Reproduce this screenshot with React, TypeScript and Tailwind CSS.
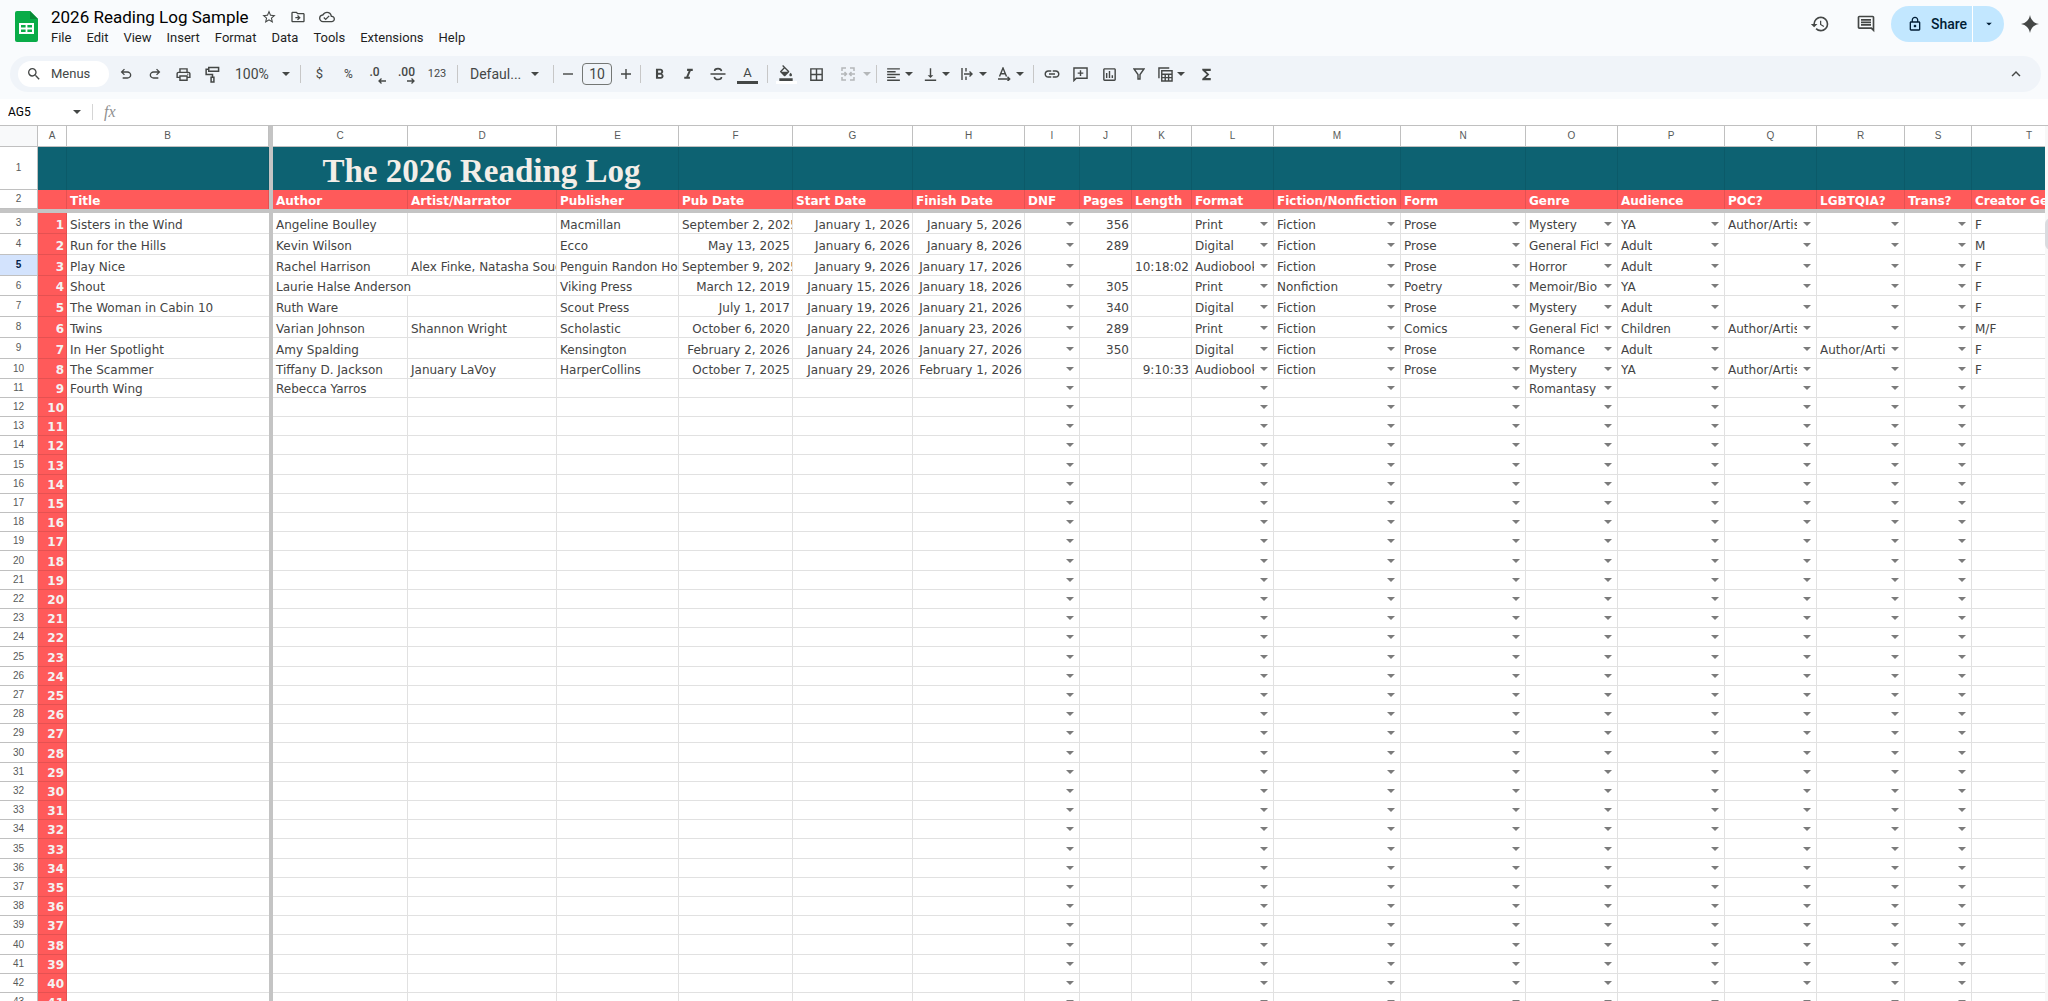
import React from 'react';
import {
  MdStarBorder,
  MdOutlineDriveFileMove,
  MdOutlineCloudDone,
  MdSearch,
  MdOutlinePrint,
  MdFormatBold,
  MdFormatItalic,
  MdFormatColorFill,
  MdBorderAll,
  MdFormatAlignLeft,
  MdVerticalAlignBottom,
  MdInsertLink,
  MdOutlineAddComment,
  MdOutlineInsertChart,
  MdOutlineFilterAlt,
  MdFunctions,
  MdHistory,
  MdOutlineComment,
  MdLockOutline,
  MdKeyboardArrowUp,
} from 'react-icons/md';

type ColumnKind = 'text' | 'right' | 'select';

interface Column {
  letter: string;
  label: string;
  width: string;
  kind: ColumnKind;
}

const columns: Column[] = [
  { letter: 'C', label: 'Author', width: 'w-[135px]', kind: 'text' },
  { letter: 'D', label: 'Artist/Narrator', width: 'w-[149px]', kind: 'text' },
  { letter: 'E', label: 'Publisher', width: 'w-[122px]', kind: 'text' },
  { letter: 'F', label: 'Pub Date', width: 'w-[114px]', kind: 'right' },
  { letter: 'G', label: 'Start Date', width: 'w-[120px]', kind: 'right' },
  { letter: 'H', label: 'Finish Date', width: 'w-[112px]', kind: 'right' },
  { letter: 'I', label: 'DNF', width: 'w-[55px]', kind: 'select' },
  { letter: 'J', label: 'Pages', width: 'w-[52px]', kind: 'right' },
  { letter: 'K', label: 'Length', width: 'w-[60px]', kind: 'right' },
  { letter: 'L', label: 'Format', width: 'w-[82px]', kind: 'select' },
  { letter: 'M', label: 'Fiction/Nonfiction', width: 'w-[127px]', kind: 'select' },
  { letter: 'N', label: 'Form', width: 'w-[125px]', kind: 'select' },
  { letter: 'O', label: 'Genre', width: 'w-[92px]', kind: 'select' },
  { letter: 'P', label: 'Audience', width: 'w-[107px]', kind: 'select' },
  { letter: 'Q', label: 'POC?', width: 'w-[92px]', kind: 'select' },
  { letter: 'R', label: 'LGBTQIA?', width: 'w-[88px]', kind: 'select' },
  { letter: 'S', label: 'Trans?', width: 'w-[67px]', kind: 'select' },
  { letter: 'T', label: 'Creator Gender', width: 'w-[115px]', kind: 'text' },
];

// Title, then one value for each of the columns C to T
const books: string[][] = [
  ['Sisters in the Wind', 'Angeline Boulley', '', 'Macmillan', 'September 2, 2025', 'January 1, 2026', 'January 5, 2026', '', '356', '', 'Print', 'Fiction', 'Prose', 'Mystery', 'YA', 'Author/Artist', '', '', 'F'],
  ['Run for the Hills', 'Kevin Wilson', '', 'Ecco', 'May 13, 2025', 'January 6, 2026', 'January 8, 2026', '', '289', '', 'Digital', 'Fiction', 'Prose', 'General Fiction', 'Adult', '', '', '', 'M'],
  ['Play Nice', 'Rachel Harrison', 'Alex Finke, Natasha Soudek', 'Penguin Randon House', 'September 9, 2025', 'January 9, 2026', 'January 17, 2026', '', '', '10:18:02', 'Audiobook', 'Fiction', 'Prose', 'Horror', 'Adult', '', '', '', 'F'],
  ['Shout', 'Laurie Halse Anderson', '', 'Viking Press', 'March 12, 2019', 'January 15, 2026', 'January 18, 2026', '', '305', '', 'Print', 'Nonfiction', 'Poetry', 'Memoir/Bio', 'YA', '', '', '', 'F'],
  ['The Woman in Cabin 10', 'Ruth Ware', '', 'Scout Press', 'July 1, 2017', 'January 19, 2026', 'January 21, 2026', '', '340', '', 'Digital', 'Fiction', 'Prose', 'Mystery', 'Adult', '', '', '', 'F'],
  ['Twins', 'Varian Johnson', 'Shannon Wright', 'Scholastic', 'October 6, 2020', 'January 22, 2026', 'January 23, 2026', '', '289', '', 'Print', 'Fiction', 'Comics', 'General Fiction', 'Children', 'Author/Artist', '', '', 'M/F'],
  ['In Her Spotlight', 'Amy Spalding', '', 'Kensington', 'February 2, 2026', 'January 24, 2026', 'January 27, 2026', '', '350', '', 'Digital', 'Fiction', 'Prose', 'Romance', 'Adult', '', 'Author/Artist', '', 'F'],
  ['The Scammer', 'Tiffany D. Jackson', 'January LaVoy', 'HarperCollins', 'October 7, 2025', 'January 29, 2026', 'February 1, 2026', '', '', '9:10:33', 'Audiobook', 'Fiction', 'Prose', 'Mystery', 'YA', 'Author/Artist', '', '', 'F'],
  ['Fourth Wing', 'Rebecca Yarros', '', '', '', '', '', '', '', '', '', '', '', 'Romantasy', '', '', '', '', ''],
];

const ROW_COUNT = 41;
const ACTIVE_ROW = 5;
const menus = ['File', 'Edit', 'View', 'Insert', 'Format', 'Data', 'Tools', 'Extensions', 'Help'];

const rowHeight = (index: number) => {
  if (index < 8) return index % 4 === 3 ? 'h-[20px]' : 'h-[21px]';
  return (index - 8) % 5 === 4 ? 'h-[20px]' : 'h-[19px]';
};

const Caret = ({ className = '' }: { className?: string }) => (
  <svg viewBox="0 0 8 4" className={`h-1 w-2 shrink-0 fill-current ${className}`} aria-hidden="true">
    <path d="M0 0h8L4 4z" />
  </svg>
);

const Divider = () => <span className="mx-1 h-[18px] w-px shrink-0 bg-[#c7c7c7]" />;

interface ToolButtonProps {
  label: string;
  width?: string;
  children: React.ReactNode;
}

const ToolButton = ({ label, width = 'w-[29px]', children }: ToolButtonProps) => (
  <button type="button" aria-label={label} className={`flex h-7 shrink-0 items-center justify-center ${width}`}>
    {children}
  </button>
);

const DropdownButton = ({ label, children }: ToolButtonProps) => (
  <button type="button" aria-label={label} className="flex h-7 w-[37px] shrink-0 items-center">
    <span className="flex w-6 justify-center">{children}</span>
    <Caret />
  </button>
);

const SheetsLogo = () => (
  <svg viewBox="0 0 23 31" className="h-[31px] w-[23px] shrink-0" aria-hidden="true">
    <path d="M2 0h13l8 8v21a2 2 0 0 1-2 2H2a2 2 0 0 1-2-2V2a2 2 0 0 1 2-2z" fill="#0aac48" />
    <path d="M15 0l8 8h-8z" fill="#078a35" />
    <path d="M4 12h15v11H4zM6 14v2.600h4.600V14zM12.400 14v2.600H17V14zM6 18.400V21h4.600v-2.600zM12.400 18.400V21H17v-2.600z" fill="#fff" fillRule="evenodd" />
  </svg>
);

const TopBar = () => (
  <header className="flex items-start pl-[15px] pr-2">
    <div className="pt-[11px]">
      <SheetsLogo />
    </div>
    <div className="ml-[9px] pt-1">
      <div className="flex h-[26px] items-center pl-1">
        <h1 className="text-[17px] leading-6 text-black">2026 Reading Log Sample</h1>
        <div className="ml-3 flex items-center gap-[13px] text-[16px] text-[#444746]">
          <button type="button" aria-label="Star"><MdStarBorder /></button>
          <button type="button" aria-label="Move"><MdOutlineDriveFileMove /></button>
          <button type="button" aria-label="See document status"><MdOutlineCloudDone /></button>
        </div>
      </div>
      <nav className="flex gap-[15px] pl-1 text-[13px] leading-4 text-[#1f1f1f]">
        {menus.map((menu) => (
          <button key={menu} type="button">{menu}</button>
        ))}
      </nav>
    </div>
    <div className="ml-auto flex items-center pt-1.5 text-[#444746]">
      <button type="button" aria-label="Version history" className="mr-[26px]"><MdHistory className="size-5" /></button>
      <button type="button" aria-label="Comments" className="mr-[15px]"><MdOutlineComment className="size-5" /></button>
      <div className="mr-4 flex h-9 overflow-hidden rounded-full bg-[#c2e7ff] text-[#001d35]">
        <button type="button" className="flex w-[82px] items-center gap-2 border-r border-white pl-4 text-[14px] font-medium">
          <MdLockOutline className="size-4" />
          Share
        </button>
        <button type="button" aria-label="Share options" className="flex w-[31px] items-center justify-center">
          <Caret className="scale-75" />
        </button>
      </div>
      <button type="button" aria-label="Ask Gemini">
        <svg viewBox="0 0 20 20" className="size-5 fill-[#444746]" aria-hidden="true">
          <path d="M10 1c.9 5 4 8.100 9 9-5 .9-8.100 4-9 9-.9-5-4-8.100-9-9 5-.9 8.100-4 9-9z" />
        </svg>
      </button>
    </div>
  </header>
);

const Toolbar = () => (
  <div className="ml-2.5 mr-[7px] mt-2.5 flex h-9 items-center rounded-full bg-[#f0f4f9] pl-2 pr-4 text-[14px] text-[#444746]">
    <button type="button" className="mr-0.5 flex h-[26px] w-[91px] shrink-0 items-center gap-[9px] rounded-full bg-white pl-2 text-[13px]">
      <MdSearch className="size-4" />
      Menus
    </button>
    <ToolButton label="Undo">
      <svg viewBox="0 -960 960 960" className="size-4 fill-current"><path d="M280-200v-80h284q63 0 109.500-40T720-420q0-60-46.500-100T564-560H312l104 104-56 56-200-200 200-200 56 56-104 104h252q97 0 166.500 63T800-420q0 94-69.500 157T564-200H280Z" /></svg>
    </ToolButton>
    <ToolButton label="Redo">
      <svg viewBox="0 -960 960 960" className="size-4 fill-current"><path d="M396-200q-97 0-166.500-63T160-420q0-94 69.500-157T396-640h252L544-744l56-56 200 200-200 200-56-56 104-104H396q-63 0-109.500 40T240-420q0 60 46.500 100T396-280h284v80H396Z" /></svg>
    </ToolButton>
    <ToolButton label="Print"><MdOutlinePrint className="size-[17px]" /></ToolButton>
    <ToolButton label="Paint format">
      <svg viewBox="0 0 16 18" className="h-[17px] w-[15px] fill-none stroke-current stroke-[1.6]"><path d="M4 1.500h10.500v4H4zM4 3.500H1.200V9H8v3M6.500 12h3v5h-3z" /></svg>
    </ToolButton>
    <div className="relative flex w-[69px] shrink-0 items-center">
      <select aria-label="Zoom" className="w-full appearance-none pl-2" defaultValue="100%">
        <option>100%</option>
      </select>
      <Caret className="pointer-events-none absolute right-1.5" />
    </div>
    <Divider />
    <ToolButton label="Format as currency"><span className="text-[13px]">$</span></ToolButton>
    <ToolButton label="Format as percent"><span className="text-[12px]">%</span></ToolButton>
    <ToolButton label="Decrease decimal places">
      <span className="relative pb-1 pr-1.5 text-[12px] font-medium leading-4">
        .0
        <svg viewBox="0 0 8 6" className="absolute bottom-0 right-0 h-1.5 w-2 fill-none stroke-current stroke-[1.3]"><path d="M8 3H1M3.500.5L1 3l2.500 2.500" /></svg>
      </span>
    </ToolButton>
    <ToolButton label="Increase decimal places">
      <span className="relative pb-1 text-[12px] font-medium leading-4">
        .00
        <svg viewBox="0 0 8 6" className="absolute bottom-0 right-0 h-1.5 w-2 fill-none stroke-current stroke-[1.3]"><path d="M0 3h7M4.500.5L7 3 4.500 5.500" /></svg>
      </span>
    </ToolButton>
    <ToolButton label="More formats" width="w-8"><span className="text-[11px]">123</span></ToolButton>
    <Divider />
    <div className="relative flex w-[87px] shrink-0 items-center">
      <select aria-label="Font" className="w-full appearance-none pl-2" defaultValue="Defaul...">
        <option>Defaul...</option>
      </select>
      <Caret className="pointer-events-none absolute right-2.5" />
    </div>
    <Divider />
    <ToolButton label="Decrease font size" width="w-5">
      <svg viewBox="0 0 10 10" className="size-2.5 fill-none stroke-current stroke-[1.4]"><path d="M0 5h10" /></svg>
    </ToolButton>
    <input aria-label="Font size" defaultValue="10" className="mx-1 h-[22px] w-[30px] rounded border border-[#747775] text-center" />
    <ToolButton label="Increase font size" width="w-5">
      <svg viewBox="0 0 10 10" className="size-2.5 fill-none stroke-current stroke-[1.4]"><path d="M0 5h10M5 0v10" /></svg>
    </ToolButton>
    <Divider />
    <ToolButton label="Bold"><MdFormatBold className="size-[17px]" /></ToolButton>
    <ToolButton label="Italic"><MdFormatItalic className="size-[17px]" /></ToolButton>
    <ToolButton label="Strikethrough">
      <svg viewBox="0 0 16 16" className="size-4 fill-none stroke-current stroke-[1.6]"><path d="M.5 8h15M11.500 5.200C11.200 3.500 9.800 2.600 8 2.600S4.600 3.600 4.600 5M4.300 10.800c.3 1.800 1.900 2.700 3.700 2.700s3.500-.9 3.500-2.500" /></svg>
    </ToolButton>
    <ToolButton label="Text color" width="w-[31px]">
      <span className="w-[21px] border-b-[3px] border-current text-[13px] leading-4">A</span>
    </ToolButton>
    <Divider />
    <ToolButton label="Fill color" width="w-7">
      <span className="flex w-[21px] justify-center border-b-[3px] border-white"><MdFormatColorFill className="size-4" /></span>
    </ToolButton>
    <ToolButton label="Borders" width="w-8"><MdBorderAll className="size-[17px]" /></ToolButton>
    <button type="button" aria-label="Merge cells" className="flex h-7 w-10 shrink-0 items-center text-[#b4b7b9]">
      <span className="flex w-[31px] justify-center">
        <svg viewBox="0 0 14 14" className="size-3.5 fill-none stroke-current stroke-[1.5]"><path d="M5 1H1v3M9 1h4v3M5 13H1v-3M9 13h4v-3M0 7h5M14 7H9M3.500 5L5.500 7l-2 2M10.500 5L8.500 7l2 2" /></svg>
      </span>
      <Caret />
    </button>
    <Divider />
    <DropdownButton label="Horizontal align"><MdFormatAlignLeft className="size-[17px]" /></DropdownButton>
    <DropdownButton label="Vertical align"><MdVerticalAlignBottom className="size-[17px]" /></DropdownButton>
    <DropdownButton label="Text wrapping">
      <svg viewBox="0 0 12 12" className="size-3 fill-none stroke-current stroke-[1.4]"><path d="M1 0v12M5 0v3.500M5 8.500V12M3 6h8M8.500 3.500L11 6 8.500 8.500" /></svg>
    </DropdownButton>
    <DropdownButton label="Text rotation">
      <svg viewBox="0 0 14 14" className="size-3.5 fill-none stroke-current stroke-[1.4]"><path d="M2.500 9.500L6 1l3.500 8.500M3.800 6.800h4.400M1 12h11.500M10.500 9.800l2.200 2.200-2.200 2.200" /></svg>
    </DropdownButton>
    <Divider />
    <ToolButton label="Insert link" width="w-7"><MdInsertLink className="size-[18px]" /></ToolButton>
    <ToolButton label="Insert comment">
      <svg viewBox="0 0 16 16" className="size-[15px] fill-none stroke-current stroke-[1.5]"><path d="M1 14.500V1h14v11H3.500zM8 3.500v6M5 6.500h6" /></svg>
    </ToolButton>
    <ToolButton label="Insert chart"><MdOutlineInsertChart className="size-[17px]" /></ToolButton>
    <ToolButton label="Create a filter">
      <svg viewBox="0 0 12 12" className="size-3 fill-none stroke-current stroke-[1.4]"><path d="M1 1h10L7 6.500V11H5V6.500z" /></svg>
    </ToolButton>
    <DropdownButton label="Table views">
      <svg viewBox="0 0 16 16" className="size-[15px] fill-none stroke-current stroke-[1.5]"><path d="M1 12V1h11M4 4h11v11H4zM4 7.700h11M4 11.300h11M7.700 7.700V15M11.300 7.700V15" /></svg>
    </DropdownButton>
    <ToolButton label="Functions" width="w-8"><MdFunctions className="size-[17px]" /></ToolButton>
    <button type="button" aria-label="Hide the menus" className="ml-auto"><MdKeyboardArrowUp className="size-[18px]" /></button>
  </div>
);

const FormulaBar = () => (
  <div className="flex h-[27px] shrink-0 items-center border-b border-[#c0c0c0] bg-white">
    <input aria-label="Name box" defaultValue="AG5" className="w-[73px] pl-2 text-[12px] text-black" />
    <button type="button" aria-label="Named ranges" className="mr-[11px] text-[#444746]"><Caret /></button>
    <span className="h-4 w-px bg-[#d5d5d5]" />
    <label htmlFor="formula" className="w-9 pl-[11px] font-['Liberation_Serif',serif] text-[16px] italic text-[#8f8f8f]">fx</label>
    <input id="formula" className="min-w-0 flex-1" />
  </div>
);

const cellBase = 'overflow-hidden whitespace-nowrap border-b border-r border-[#e1e1e1] p-0 pl-[3px] pr-0.5 align-bottom';
const headBase = 'overflow-hidden whitespace-nowrap border-r border-[#e55151] bg-[#ff5a5a] p-0 pl-[3px] text-left align-bottom font-bold text-white';
const letterBase = 'border-b border-r border-[#c0c0c0] bg-white p-0 font-normal';
const numberBase = 'border-b border-r border-[#c0c0c0] p-0 text-center font-["Liberation_Sans",sans-serif] text-[10px] leading-3';
const tealBase = 'border-r border-[#0b5a69] bg-[#0d6272] p-0';
const freezeBar = 'bg-[#c4c4c4] p-0';

interface CellProps {
  column: Column;
  value: string;
  row: number;
  spills: boolean;
}

const Cell = ({ column, value, row, spills }: CellProps) => {
  if (column.kind === 'select') {
    return (
      <td className="border-b border-r border-[#e1e1e1] p-0 align-bottom">
        <div className="relative">
          <select aria-label={`${column.label} row ${row}`} defaultValue={value} className="block h-4 w-full appearance-none overflow-hidden pl-[3px] pr-[19px] leading-4">
            <option>{value}</option>
          </select>
          <Caret className="pointer-events-none absolute right-[5px] top-[5px] text-[#7b7b7b]" />
        </div>
      </td>
    );
  }
  if (column.kind === 'right') {
    const inset = column.letter === 'F' ? 'pl-[3px]' : 'pl-0';
    return (
      <td className={`overflow-hidden whitespace-nowrap border-b border-r border-[#e1e1e1] p-0 pr-0.5 text-right align-bottom ${inset}`}>{value}</td>
    );
  }
  if (spills) {
    return <td className="whitespace-nowrap border-b border-[#e1e1e1] p-0 pl-[3px] align-bottom">{value}</td>;
  }
  return <td className={cellBase}>{value}</td>;
};

const Sheet = () => (
  <table className="w-px table-fixed border-separate border-spacing-0 font-['DejaVu_Sans',sans-serif] text-[12px] leading-4 text-[#434343]">
    <colgroup>
      <col className="w-[38px]" />
      <col className="w-[29px]" />
      <col className="w-[202px]" />
      <col className="w-1" />
      {columns.map((column) => (
        <col key={column.letter} className={column.width} />
      ))}
    </colgroup>
    <thead>
      <tr className="h-[21px] font-['Liberation_Sans',sans-serif] text-[10px] leading-3 text-[#575a5a]">
        <td className="border-b border-r border-[#c0c0c0] bg-[#f8f9fa] p-0" />
        <th className={letterBase}>A</th>
        <th className={letterBase}>B</th>
        <td rowSpan={3} className={freezeBar} />
        {columns.map((column) => (
          <th key={column.letter} className={letterBase}>{column.letter}</th>
        ))}
      </tr>
      <tr className="h-[43px]">
        <th className={`${numberBase} font-normal text-[#575a5a]`}>1</th>
        <td className={tealBase} />
        <td className={tealBase} />
        <th colSpan={3} className={`${tealBase} pb-0.5 pl-3 align-bottom font-['Liberation_Serif',serif] text-[33px] font-bold leading-[34px] text-[#f3eee8]`}>
          The 2026 Reading Log
        </th>
        {columns.slice(3).map((column) => (
          <td key={column.letter} className={tealBase} />
        ))}
      </tr>
      <tr className="h-[19px]">
        <th className={`${numberBase} font-normal text-[#575a5a]`}>2</th>
        <td className={headBase} />
        <th className={headBase}>Title</th>
        {columns.map((column) => (
          <th key={column.letter} className={headBase}>{column.label}</th>
        ))}
      </tr>
      <tr className="h-1">
        <td colSpan={columns.length + 4} className={freezeBar} />
      </tr>
    </thead>
    <tbody>
      {Array.from({ length: ROW_COUNT }, (_, index) => {
        const book = books[index] ?? [];
        const row = index + 3;
        const isActive = row === ACTIVE_ROW;
        const spillsOver = book[1] === 'Laurie Halse Anderson';
        return (
          <tr key={row} className={rowHeight(index)}>
            <th className={`${numberBase} ${isActive ? 'bg-[#d3e3fd] font-bold text-[#041e49]' : 'font-normal text-[#575a5a]'}`}>{row}</th>
            <td className="border-b border-r border-[#e55151] bg-[#ff5a5a] p-0 pr-0.5 text-right align-bottom font-bold text-[#f3f3f3]">{index + 1}</td>
            <td className="overflow-hidden whitespace-nowrap border-b border-[#e1e1e1] p-0 pl-[3px] align-bottom">{book[0]}</td>
            <td className={freezeBar} />
            {columns.map((column, position) => (
              <Cell
                key={column.letter}
                column={column}
                value={book[position + 1] ?? ''}
                row={row}
                spills={spillsOver && column.letter === 'C'}
              />
            ))}
          </tr>
        );
      })}
    </tbody>
  </table>
);

export default function App() {
  return (
    <div className="flex h-screen flex-col overflow-hidden bg-[#f9fbfd] font-[Roboto,sans-serif]">
      <TopBar />
      <Toolbar />
      <div className="mt-[7px] flex min-h-0 flex-1 flex-col bg-white">
        <FormulaBar />
        <main className="flex min-h-0 flex-1">
          <div className="min-w-0 flex-1 overflow-hidden">
            <Sheet />
          </div>
          <div className="w-[3px] shrink-0 overflow-hidden bg-[#f8f8f8] pt-[92px]">
            <div className="h-8 w-3 rounded-full bg-[#dadce0]" />
          </div>
        </main>
      </div>
    </div>
  );
}
